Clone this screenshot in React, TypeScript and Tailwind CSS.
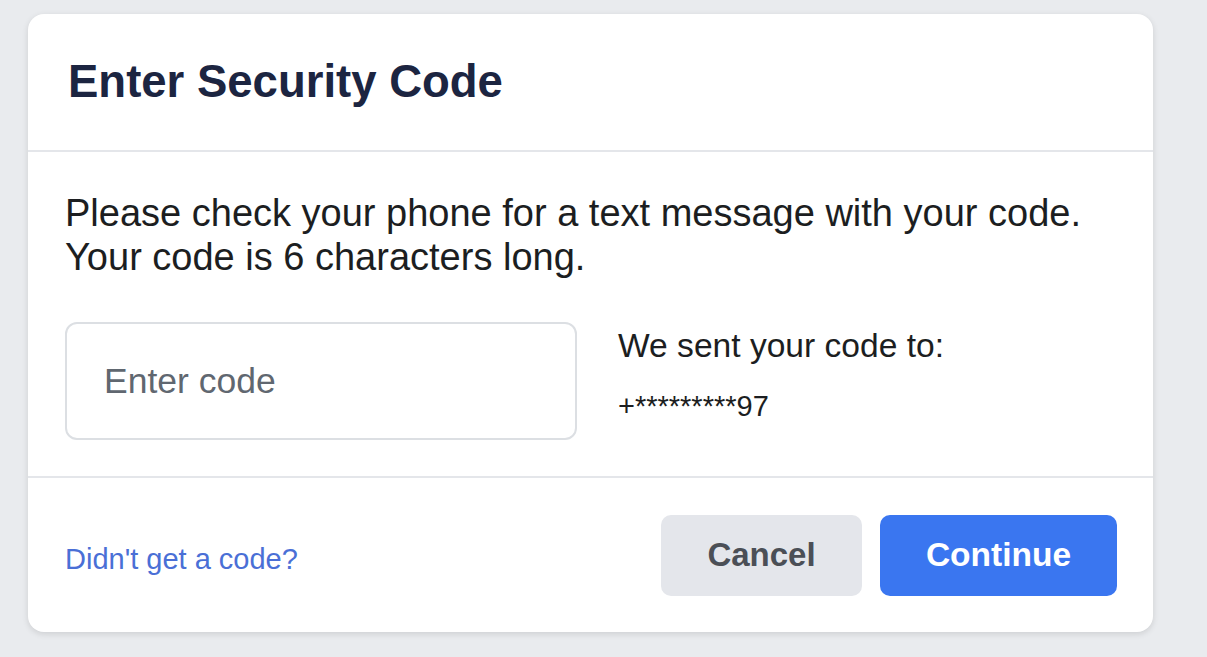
import React, { useState } from 'react';

export default function App() {
  const [code, setCode] = useState('');

  return (
    <div
      className="w-[1207px] h-[657px] bg-[#e9ebee] pt-[14px] pl-[28px] overflow-hidden"
      style={{ fontFamily: '"Liberation Sans", Arial, sans-serif' }}
    >
      <div className="w-[1125px] h-[618px] bg-white rounded-[16px] shadow-[0_2px_6px_rgba(0,0,0,0.12)] flex flex-col">
        {/* Header */}
        <div className="h-[138px] flex items-center pl-[40px] border-b-2 border-[#e4e6ea]">
          <h1 className="text-[45.5px] font-bold text-[#1c2541] leading-none -mt-[1px]">Enter Security Code</h1>
        </div>

        {/* Body */}
        <div className="px-[37px] pt-[39px] pb-[36px] border-b-2 border-[#e4e6ea]">
          <p className="text-[38px] leading-[44px] text-[#1c1e21]">
            Please check your phone for a text message with your code.
            <br />
            Your code is 6 characters long.
          </p>
          <div className="flex gap-[41px] mt-[43px]">
            <input
              type="text"
              value={code}
              onChange={(e) => setCode(e.target.value)}
              placeholder="Enter code"
              className="w-[512px] h-[118px] rounded-[12px] border-2 border-[#dcdfe3] px-[37px] text-[35.5px] text-[#1c1e21] placeholder-[#606770] outline-none"
            />
            <div className="flex flex-col pt-[2px] text-[#1c1e21]">
              <span className="text-[33.6px] leading-[44px]">We sent your code to:</span>
              <span className="text-[29px] leading-[40px] mt-[18px]">+*********97</span>
            </div>
          </div>
        </div>

        {/* Footer */}
        <div className="flex-1 flex items-center justify-between pl-[37px] pr-[36px]">
          <a href="#" className="text-[29px] text-[#4a6fd6] mt-[9px]">
            Didn't get a code?
          </a>
          <div className="flex gap-[18px]">
            <button className="w-[201px] h-[81px] rounded-[10px] bg-[#e4e6eb] text-[#4b4f56] text-[33px] font-bold">
              Cancel
            </button>
            <button className="w-[237px] h-[81px] rounded-[10px] bg-[#3a76f0] text-white text-[33.5px] font-bold">
              Continue
            </button>
          </div>
        </div>
      </div>
    </div>
  );
}
